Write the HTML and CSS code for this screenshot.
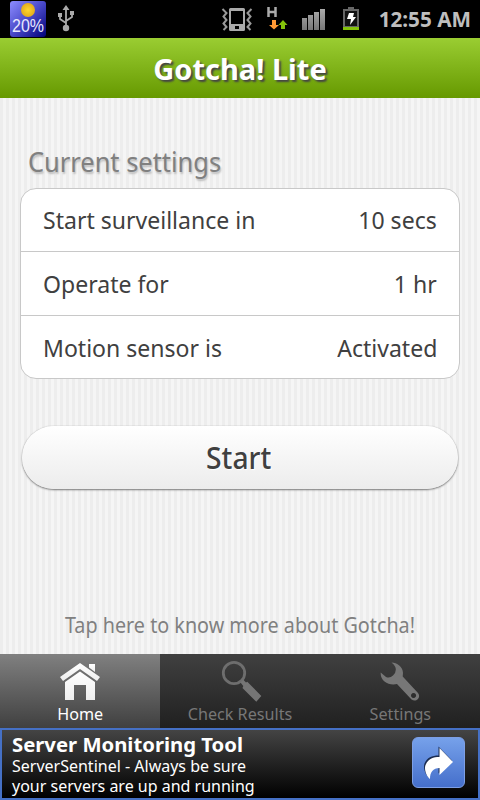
FILE: index.html
```html
<!DOCTYPE html>
<html lang="en">
<head>
<meta charset="utf-8">
<title>Gotcha! Lite</title>
<link rel="stylesheet" href="styles.css">
</head>
<body>
<div class="status">
  <div class="weather"><i class="sun"></i><span>20%</span></div>
  <svg class="usb" width="18" height="27" viewBox="0 0 18 27" fill="none" stroke="#aaa" stroke-width="1.800"><path d="M9 22V5M9 18L3 14V11M9 16l6-4V8"/><path d="M9 0l3.500 5h-7zM1 8h4v4H1zM13 6h4v4h-4z" fill="#aaa" stroke="none"/><circle cx="9" cy="23" r="3.200" fill="#aaa" stroke="none"/></svg>
  <svg class="indicators" width="150" height="38" viewBox="0 0 150 38">
    <defs>
      <linearGradient id="bar" x2="0" y2="1"><stop stop-color="#aaa"/><stop offset="1" stop-color="#777"/></linearGradient>
    </defs>
    <g fill="none" stroke="#999" stroke-width="2"><path d="M2.500 9l4 4-3 3.500 3 3.500-3 3.500 3 3.500-3 3M31.500 9l-4 4 3 3.500-3 3.500 3 3.500-3 3.500 3 3"/></g>
    <path fill="#aaa" fill-rule="evenodd" d="M10.500 8h13q1.500 0 1.500 1.500v20q0 1.500-1.500 1.500h-13Q9 31 9 29.500v-20Q9 8 10.500 8zM11 11v13h12V11zM15 26v3h4v-3z"/>
    <path d="M48.500 7v10M55.500 7v10M48 12h8" stroke="#aaa" stroke-width="2.500"/>
    <path fill="#ff9a35" d="M52 20h4v5h3l-5 4.500-5-4.500h3z"/><path fill="#84c20a" d="M63 20l4.500 5H65v4h-4v-4h-2.500z"/>
    <path fill="url(#bar)" d="M82 18h5v12h-5zM88 15h5v15h-5zM94 12h5v18h-5zM100 9h5v21h-5z"/>
    <path fill="#666" d="M128 7h6v2h5v21h-16V9h5z"/><path fill="#111" d="M125 11h12v15h-12z"/><path fill="#84c20a" d="M123 27h16v3h-16z"/>
    <path fill="#fff" d="M129 13h5l-1 4h3l-6 8 1-6h-4z"/>
  </svg>
  <span class="clock">12:55 AM</span>
</div>
<header class="title"><h1>Gotcha! Lite</h1></header>
<main>
  <h2>Current settings</h2>
  <ul class="settings">
    <li><span>Start surveillance in</span><span>10 secs</span></li>
    <li><span>Operate for</span><span>1 hr</span></li>
    <li><span>Motion sensor is</span><span>Activated</span></li>
  </ul>
  <button class="start"><span>Start</span></button>
  <p class="more">Tap here to know more about Gotcha!</p>
</main>
<nav>
  <a class="tab active">
    <svg width="42" height="42" viewBox="0 0 42 42"><defs><linearGradient id="roof" x2="0" y2="1"><stop stop-color="#fff"/><stop offset="1" stop-color="#eee"/></linearGradient></defs><g fill="url(#roof)"><path d="M30 5h6v8l-6-4.500z"/><path d="M21 4L41 18l-3 4L21 10 4 22l-3-4z"/><path d="M21 12.500l15 10.500v18h-9V26H15v15H6V23z"/></g></svg>
    <span>Home</span></a>
  <a class="tab">
    <svg width="44" height="44" viewBox="0 0 44 44"><circle cx="16" cy="14" r="10.700" fill="none" stroke="#6e6e6e" stroke-width="2.800"/><path fill="#757575" d="M22.500 23.500l2.800-2.800 2.700 2.700 1.300-.7L43.300 37l-5 5.700L24.500 29l.8-2z"/></svg>
    <span>Check Results</span></a>
  <a class="tab">
    <svg width="42" height="42" viewBox="0 0 42 42"><path fill="#777" fill-rule="evenodd" d="M12.500 3.500C18 3.500 24 8 24 14L23.700 17.500 39 34C42.500 38.500 37 44 32.500 40.500L18 25C10 27 1 22 1.700 13.500L7 18q4 1.500 7-1.500 4-4 2.300-8.500Q15 5 12.500 3.500zM34.500 34a2.500 2.500 0 1 0 .1 0z"/></svg>
    <span>Settings</span></a>
</nav>
<aside class="ad">
  <div class="copy"><strong>Server Monitoring Tool</strong><span>ServerSentinel - Always be sure</span><span>your servers are up and running</span></div>
  <div class="go"><svg width="34" height="36" viewBox="0 0 34 36"><path fill="#1b2c50" transform="translate(-1 -1.500)" d="M17.500 3L31 17 17.500 30v-7C11 23 8 27 8 34 4 31 2 24 3.500 20 6 14 11 12 17.500 12z"/><path fill="#fff" d="M17.500 3L31 17 17.500 30v-7C11 23 8 27 8 34 4 31 2 24 3.500 20 6 14 11 12 17.500 12z"/></svg></div>
</aside>
</body>
</html>
```
FILE: styles.css
```css
* { box-sizing: border-box; }
body {
  margin: 0;
  width: 480px;
  height: 800px;
  overflow: hidden;
  display: flex;
  flex-direction: column;
  font-family: "Noto Sans", "Open Sans", sans-serif;
  background: repeating-linear-gradient(90deg, #ededed 0 3px, #f5f5f5 3px 6px);
}
h1, h2, p, ul { margin: 0; padding: 0; font-weight: 400; }
.status { height: 38px; background: #000; display: flex; flex: none; }
.weather {
  width: 36px;
  height: 36px;
  margin: 1px 0 0 10px;
  border-radius: 3px;
  background: linear-gradient(135deg, #8d8dff, #4848c8 50%, #000078);
  display: flex;
  flex-direction: column;
  align-items: center;
}
.sun { width: 14px; height: 14px; margin-top: 2px; border-radius: 50%; background: radial-gradient(#ffd72e, #d79a16); flex: none; }
.weather span { color: #e8e8ff; font: 19px/17px "Liberation Sans", sans-serif; transform: scaleX(.84); }
.usb { margin: 5px 0 0 11px; flex: none; }
.indicators { margin-left: 145px; flex: none; }
.clock { margin-left: -10px; flex: 1; text-align: right; padding-right: 9px; color: #bebebe; font-size: 20.7px; font-weight: 700; line-height: 38px; white-space: nowrap; }
.title { height: 60px; flex: none; background: linear-gradient(#9acd32, #669900); text-align: center; }
h1 { color: #fff; font-size: 29px; font-weight: 700; line-height: 61px; text-shadow: 2px 2px 2px #444; }
main { height: 556px; flex: none; padding: 46px 20px 0; }
h2 { color: #808080; font-size: 27px; line-height: 36px; padding-left: 8px; text-shadow: 1px 2px 2px #bbb; margin-bottom: 8px; transform: scaleX(.942); transform-origin: 8px 0; }
.settings { list-style: none; height: 191px; background: #fff; border: 1px solid #c8c8c8; border-radius: 16px; color: #404040; font-size: 24px; }
.settings li { height: 64px; padding: 0 22px; display: flex; justify-content: space-between; line-height: 64px; border-bottom: 1px solid #c8c8c8; }
.settings li:first-child { height: 63px; line-height: 62px; }
.settings li:last-child { border: 0; height: 62px; }
.settings span { transform: scaleX(.96); transform-origin: left; }
.settings span:last-child { transform-origin: right; }
.start {
  display: block;
  width: 436px;
  height: 63px;
  margin: 47px auto 0 2px;
  padding: 0;
  border: 0;
  border-radius: 32px;
  background: linear-gradient(#fff, #ececec);
  box-shadow: 0 1px 2px #777, 0 0 1px #bbb;
  color: #404040;
  font: 500 30px/63px "Noto Sans", sans-serif;
  text-shadow: 1px 1px 1px #fff;
}
.start span { display: inline-block; transform: translateX(-1px) scaleX(.94); }
.more { margin-top: 120px; color: #808080; font-size: 22px; line-height: 30px; text-align: center; white-space: nowrap; transform: scaleX(.898); }
nav { height: 74px; flex: none; display: grid; grid-template-columns: repeat(3, 1fr); background: linear-gradient(#404040, #202020); }
.tab { display: flex; flex-direction: column; align-items: center; padding-top: 5px; color: #777; font-size: 17px; }
.tab svg { flex: none; margin-bottom: -2px; }
.tab svg[width="42"] { margin-bottom: 0; }
.tab span { line-height: 25px; transform: scaleX(.95); }
.active { background: linear-gradient(#808080, #404040); color: #fff; }
.ad { height: 72px; flex: none; border: 2px solid #4570c5; background: linear-gradient(#444, #000); color: #fff; display: flex; justify-content: space-between; padding: 0 13px 0 10px; }
.copy { display: flex; flex-direction: column; font-size: 16px; white-space: nowrap; padding-top: 2px; }
.copy strong { font-size: 20.3px; line-height: 24px; }
.copy span { line-height: 20px; }
.go { width: 53px; height: 51px; margin-top: 7px; border: 1px solid #7d9fe5; border-radius: 6px; background: linear-gradient(#76a1ea, #456fcb); display: grid; place-items: center; }
```
